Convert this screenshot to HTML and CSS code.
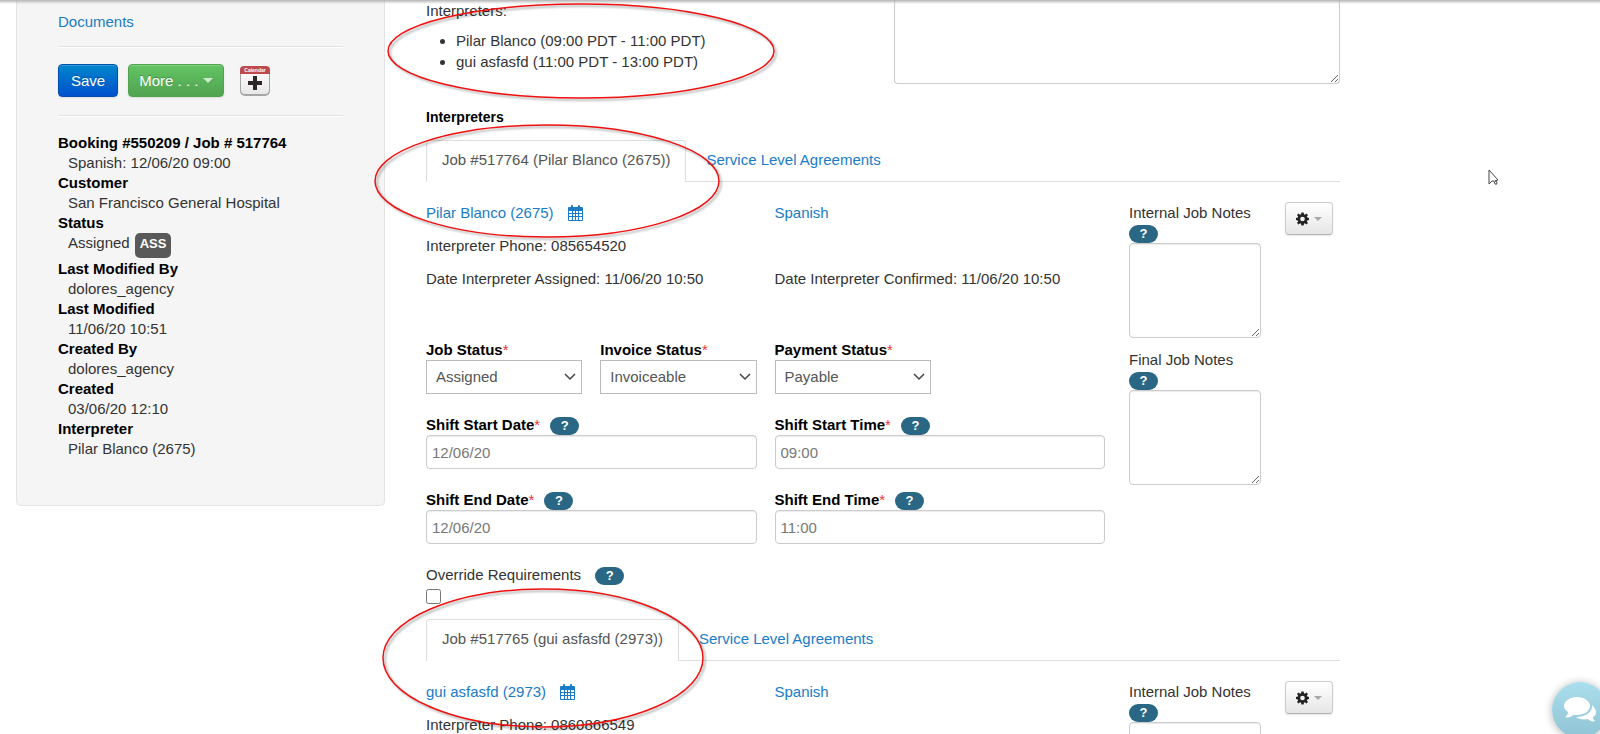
FILE: index.html
```
<!DOCTYPE html>
<html lang="en">
<head>
    <meta charset="UTF-8">
    <meta name="viewport" content="width=device-width, initial-scale=1.0">
    <title>Job #517764</title>
    <link rel="stylesheet" href="styles.css">
</head>
<body>
    <!-- Shared icons -->
    <svg class="sprite" aria-hidden="true">
        <symbol id="calendar" viewBox="0 0 15 16">
            <path fill="currentColor" fill-rule="evenodd" d="M1 2h2V1q0-1 1-1t1 1v1h5V1q0-1 1-1t1 1v1h2q1 0 1 1v12q0 1-1 1H1q-1 0-1-1V3q0-1 1-1zM1 6v2h3V6zM5 6v2h2V6zM8 6v2h2V6zM11 6v2h3V6zM1 9v2h3V9zM5 9v2h2V9zM8 9v2h2V9zM11 9v2h3V9zM1 12v3h3v-3zM5 12v3h2v-3zM8 12v3h2v-3zM11 12v3h3v-3z"/>
        </symbol>
        <symbol id="gear" viewBox="0 0 14 14">
            <path fill="currentColor" fill-rule="evenodd" d="M5.8 0h2.4l.4 1.9 1 .4L11.300 1.200l1.600 1.600-1.200 1.600.4 1 1.900.4v2.400l-1.900.4-.4 1 1.200 1.600-1.600 1.600-1.700-1.100-1 .4-.4 1.900H5.800l-.4-1.900-1-.4-1.700 1.100-1.600-1.600 1.200-1.600-.4-1L0 8.200V5.800l1.900-.4.4-1L1.100 2.800l1.600-1.600 1.700 1.100 1-.4zM7 4.500a2.500 2.500 0 1 0 0 5 2.500 2.500 0 0 0 0-5z"/>
        </symbol>
    </svg>

    <div class="page">
        <!-- Sidebar -->
        <aside class="sidebar">
            <a href="#">Documents</a>
            <hr>
            <div class="actions">
                <button class="btn btn-primary">Save</button>
                <button class="btn btn-success">More . . . <span class="caret"></span></button>
                <button class="btn-calendar" aria-label="Add to calendar">
                    <svg width="30" height="32" viewBox="0 0 30 32">
                        <defs>
                            <linearGradient id="paper" x1="0" y1="0" x2="0" y2="1">
                                <stop offset="0" stop-color="#fff"/>
                                <stop offset="1" stop-color="#e8e8e8"/>
                            </linearGradient>
                        </defs>
                        <rect x="0" y="1" width="30" height="30" rx="5" fill="#a5a5a5"/>
                        <rect x="1" y="1" width="28" height="28" rx="4" fill="url(#paper)"/>
                        <path d="M0 9V5q0-4 4-4h22q4 0 4 4v4z" fill="#bd4b4d"/>
                        <text x="15" y="7" text-anchor="middle" class="cal-text">Calendar</text>
                        <path d="M13 11h4v5h5v4h-5v5h-4v-5H8v-4h5z" fill="#2d2626"/>
                    </svg>
                </button>
            </div>
            <hr>
            <dl>
                <dt>Booking #550209 / Job # 517764</dt>
                <dd>Spanish: 12/06/20 09:00</dd>
                <dt>Customer</dt>
                <dd>San Francisco General Hospital</dd>
                <dt>Status</dt>
                <dd class="status">Assigned <span class="badge">ASS</span></dd>
                <dt>Last Modified By</dt>
                <dd>dolores_agency</dd>
                <dt>Last Modified</dt>
                <dd>11/06/20 10:51</dd>
                <dt>Created By</dt>
                <dd>dolores_agency</dd>
                <dt>Created</dt>
                <dd>03/06/20 12:10</dd>
                <dt>Interpreter</dt>
                <dd>Pilar Blanco (2675)</dd>
            </dl>
        </aside>

        <!-- Booking -->
        <main>
            <div class="summary">
                <div>
                    Interpreters:
                    <ul>
                        <li>Pilar Blanco (09:00 PDT - 11:00 PDT)</li>
                        <li>gui asfasfd (11:00 PDT - 13:00 PDT)</li>
                    </ul>
                </div>
                <textarea class="booking-notes" aria-label="Booking notes"></textarea>
            </div>

            <h2>Interpreters</h2>

            <!-- Job 517764 -->
            <section>
                <nav class="tabs">
                    <a href="#" class="tab active">Job #517764 (Pilar Blanco (2675))</a>
                    <a href="#" class="tab">Service Level Agreements</a>
                </nav>
                <div class="job">
                    <div class="fields">
                        <div class="half"><a href="#">Pilar Blanco (2675)</a><a href="#" class="icon-link" aria-label="Calendar"><svg width="15" height="16"><use href="#calendar"/></svg></a></div>
                        <div class="half"><a href="#">Spanish</a></div>
                        <div class="full info">Interpreter Phone: 085654520</div>
                        <div class="half info">Date Interpreter Assigned: 11/06/20 10:50</div>
                        <div class="half info">Date Interpreter Confirmed: 11/06/20 10:50</div>

                        <div class="field statuses">
                            <label for="jobStatus">Job Status<i>*</i></label>
                            <select id="jobStatus"><option>Assigned</option></select>
                        </div>
                        <div class="field statuses">
                            <label for="invoiceStatus">Invoice Status<i>*</i></label>
                            <select id="invoiceStatus"><option>Invoiceable</option></select>
                        </div>
                        <div class="field statuses">
                            <label for="paymentStatus">Payment Status<i>*</i></label>
                            <select id="paymentStatus"><option>Payable</option></select>
                        </div>

                        <div class="field half first">
                            <label for="startDate">Shift Start Date<i>*</i> <span class="help">?</span></label>
                            <input type="text" id="startDate" value="12/06/20">
                        </div>
                        <div class="field half">
                            <label for="startTime">Shift Start Time<i>*</i> <span class="help">?</span></label>
                            <input type="text" id="startTime" value="09:00">
                        </div>
                        <div class="field half">
                            <label for="endDate">Shift End Date<i>*</i> <span class="help">?</span></label>
                            <input type="text" id="endDate" value="12/06/20">
                        </div>
                        <div class="field half">
                            <label for="endTime">Shift End Time<i>*</i> <span class="help">?</span></label>
                            <input type="text" id="endTime" value="11:00">
                        </div>
                        <div class="field full">
                            <label for="override" class="plain">Override Requirements <span class="help">?</span></label>
                            <input type="checkbox" id="override">
                        </div>
                    </div>
                    <div class="notes">
                        <label for="internalNotes">Internal Job Notes <span class="help">?</span></label>
                        <textarea id="internalNotes"></textarea>
                        <label for="finalNotes">Final Job Notes <span class="help">?</span></label>
                        <textarea id="finalNotes"></textarea>
                    </div>
                    <div>
                        <button class="btn btn-gear" aria-label="Settings"><svg width="14" height="14"><use href="#gear"/></svg><span class="caret"></span></button>
                    </div>
                </div>
            </section>

            <!-- Job 517765 -->
            <section>
                <nav class="tabs">
                    <a href="#" class="tab active">Job #517765 (gui asfasfd (2973))</a>
                    <a href="#" class="tab">Service Level Agreements</a>
                </nav>
                <div class="job">
                    <div class="fields">
                        <div class="half"><a href="#">gui asfasfd (2973)</a><a href="#" class="icon-link" aria-label="Calendar"><svg width="15" height="16"><use href="#calendar"/></svg></a></div>
                        <div class="half"><a href="#">Spanish</a></div>
                        <div class="full info">Interpreter Phone: 0860866549</div>
                    </div>
                    <div class="notes">
                        <label for="internalNotes2">Internal Job Notes <span class="help">?</span></label>
                        <textarea id="internalNotes2"></textarea>
                    </div>
                    <div>
                        <button class="btn btn-gear" aria-label="Settings"><svg width="14" height="14"><use href="#gear"/></svg><span class="caret"></span></button>
                    </div>
                </div>
            </section>
        </main>
    </div>

    <div class="top-shadow"></div>

    <!-- Red markers over the page -->
    <svg class="markers" width="800" height="734" aria-hidden="true">
        <ellipse cx="581" cy="51" rx="193" ry="47"/>
        <ellipse cx="547" cy="181" rx="172" ry="56"/>
        <ellipse cx="543" cy="658" rx="160" ry="69"/>
    </svg>

    <svg class="pointer" width="12" height="18" viewBox="0 0 12 18" aria-hidden="true">
        <path d="M1 1v14l3-3h2l1 3q2 1 2-1l-1-2h-1l3-1z" fill="#fff" stroke="#444"/>
    </svg>

    <button class="chat" aria-label="Chat">
        <svg width="32" height="26" viewBox="0 0 32 26">
            <path fill="#fff" d="M28 8c2 2 4 4 4 7 0 2-1 4-3 5 0 2 1 3 2 4-2 1-5 0-7-2-5 1-9 0-12-2 8 0 17-4 16-12z"/>
            <path fill="#fff" d="M13 0c7 0 13 4 13 9s-6 9-13 9q-2 0-3-.5C7 20 4 21 1 20c2-1 3-3 3-5-3-2-4-4-4-6 0-5 6-9 13-9z"/>
        </svg>
    </button>
</body>
</html>
```

FILE: styles.css
```
* {
    box-sizing: border-box;
}

body {
    margin: 0;
    height: 100vh;
    overflow: hidden;
    position: relative;
    background-color: #fff;
    color: #333;
    font-family: "Liberation Sans", Arial, sans-serif;
    font-size: 15px;
    line-height: 21px;
}

a {
    color: #1a7bc7;
    text-decoration: none;
}

input,
select,
textarea,
button {
    font-family: inherit;
    font-size: 15px;
}

.sprite {
    display: none;
}

.page {
    display: grid;
    grid-template-columns: 369px 1fr;
    column-gap: 41px;
    align-items: start;
    padding: 0 260px 0 16px;
}

/* Sidebar */
.sidebar {
    padding: 12px 41px 46px;
    background-color: #f5f5f5;
    border: 1px solid #e3e3e3;
    border-top: none;
    border-radius: 0 0 5px 5px;
    line-height: 20px;
}

.sidebar hr {
    margin: 14px 0 16px;
    border: none;
    border-top: 1px solid #e2e2e2;
    border-bottom: 1px solid #fff;
}

.actions {
    display: flex;
    align-items: center;
    gap: 10px;
    margin-bottom: 18px;
}

.sidebar dl,
.sidebar dd {
    margin: 0;
}

.sidebar dt {
    color: #000;
    font-weight: bold;
}

.sidebar dd {
    padding-left: 10px;
}

.status {
    display: flex;
    gap: 5px;
    height: 26px;
}

.badge {
    height: 25px;
    padding: 0 5px;
    border-radius: 5px;
    background-color: #595959;
    color: #fff;
    font-size: 13px;
    font-weight: bold;
    line-height: 22px;
}

/* Buttons */
.btn {
    height: 33px;
    padding: 0 12px;
    border: 1px solid #bbb;
    border-radius: 4px;
    box-shadow: inset 0 1px 0 rgba(255, 255, 255, 0.2), 0 1px 2px rgba(0, 0, 0, 0.1);
    cursor: pointer;
}

.btn-primary {
    border-color: #0050b4;
    background: linear-gradient(#0086cc, #0050cc);
    color: #fff;
    text-shadow: 0 -1px 0 rgba(0, 0, 0, 0.25);
}

.btn-success {
    padding: 0 10px;
    border-color: #51a351;
    background: linear-gradient(#62c462, #51a351);
    color: #fff;
    text-shadow: 0 -1px 0 rgba(0, 0, 0, 0.25);
}

.btn-gear {
    display: flex;
    align-items: center;
    gap: 5px;
    width: 48px;
    padding: 0 10px;
    border-color: #ccc #ccc #b3b3b3;
    background: linear-gradient(#fff, #e6e6e6);
    color: #222;
}

.caret {
    display: inline-block;
    border: 5px solid transparent;
    border-top-color: #fff;
    border-bottom: none;
    opacity: 0.7;
    vertical-align: 3px;
}

.btn-gear .caret {
    border-width: 4px 4px 0;
    border-top-color: #888;
}

.btn-calendar {
    display: flex;
    margin-left: 6px;
    padding: 0;
    border: none;
    background: none;
    cursor: pointer;
}

.cal-text {
    fill: #fff;
    font-size: 5px;
    font-weight: bold;
}

/* Booking summary */
.summary {
    display: flex;
    justify-content: space-between;
    align-items: flex-start;
}

.summary ul {
    margin: 9px 0 0;
    padding-left: 30px;
}

.booking-notes {
    width: 446px;
    height: 84px;
    border-top: none;
    border-radius: 0 0 4px 4px;
}

h2 {
    margin: 23px 0 12px;
    color: #000;
    font-size: 14px;
    line-height: 21px;
}

/* Tabs */
.tabs {
    display: flex;
    gap: 4px;
    border-bottom: 1px solid #ddd;
}

.tab {
    margin-bottom: -1px;
    padding: 8px 15px 12px;
    border: 1px solid transparent;
    border-bottom: none;
}

.tab.active {
    border-color: #ddd;
    border-radius: 4px 4px 0 0;
    background-color: #fff;
    color: #555;
}

/* Job */
.job {
    display: grid;
    grid-template-columns: 1fr 132px 55px;
    column-gap: 24px;
    padding: 20px 0 15px;
}

.fields {
    display: grid;
    grid-template-columns: repeat(4, 1fr);
    column-gap: 18px;
    align-content: start;
}

.half {
    grid-column: span 2;
}

.full {
    grid-column: 1 / -1;
}

.info {
    margin-top: 12px;
}

.icon-link {
    margin-left: 14px;
}

.icon-link svg {
    vertical-align: -3px;
}

.field {
    display: flex;
    flex-direction: column;
    align-items: flex-start;
    margin-top: 20px;
}

.statuses {
    margin-top: 50px;
}

.first {
    grid-column: 1 / span 2;
}

.field label {
    display: flex;
    height: 21px;
    color: #000;
    font-weight: bold;
    white-space: pre;
}

.field .plain {
    color: #333;
    font-weight: normal;
}

label i {
    color: #e33;
    font-style: normal;
    font-weight: normal;
}

.help {
    display: block;
    width: 29px;
    height: 18px;
    border-radius: 9px;
    background-color: #2a6785;
    color: #fff;
    font-size: 13px;
    font-weight: bold;
    line-height: 18px;
    text-align: center;
}

.field .help {
    margin: 3px 0 0 10px;
}

input[type="text"],
select,
textarea {
    border: 1px solid #ccc;
    background-color: #fff;
    color: #777;
}

input[type="text"],
textarea {
    border-radius: 4px;
    box-shadow: inset 0 1px 1px rgba(0, 0, 0, 0.08);
}

input[type="text"],
select {
    width: 100%;
    height: 34px;
    padding: 4px 5px;
}

select {
    appearance: none;
    padding: 3px 9px 5px;
    border-color: #bbb;
    background: #fff url("data:image/svg+xml,%3Csvg xmlns='http://www.w3.org/2000/svg' width='12' height='8'%3E%3Cpath d='M1 1l5 5 5-5' fill='none' stroke='%23444' stroke-width='1.5'/%3E%3C/svg%3E") no-repeat right 5px center;
    color: #555;
}

input[type="checkbox"] {
    width: 15px;
    height: 15px;
    margin: 4px 0 0;
}

textarea {
    display: block;
}

.notes label {
    display: block;
    height: 41px;
}

.notes .help {
    margin-top: 2px;
}

.notes textarea {
    width: 100%;
    height: 95px;
    margin-bottom: 11px;
}

/* Overlays */
.top-shadow {
    position: absolute;
    top: 0;
    left: 0;
    right: 0;
    height: 4px;
    background: linear-gradient(#b5b5b5, rgba(200, 200, 200, 0));
}

.markers {
    position: absolute;
    top: 0;
    left: 0;
    pointer-events: none;
}

.markers ellipse {
    fill: none;
    stroke: #f01010;
    stroke-width: 1.5;
    filter: drop-shadow(2px 2px 1px rgba(0, 0, 0, 0.35));
}

.pointer {
    position: absolute;
    top: 169px;
    left: 1488px;
}

.chat {
    position: absolute;
    top: 682px;
    right: -8px;
    display: flex;
    justify-content: center;
    align-items: center;
    width: 56px;
    height: 56px;
    padding: 0;
    border: none;
    border-radius: 50%;
    background: linear-gradient(#aadeed, #90c4d4);
    box-shadow: 0 1px 8px rgba(0, 0, 0, 0.3);
}
```
